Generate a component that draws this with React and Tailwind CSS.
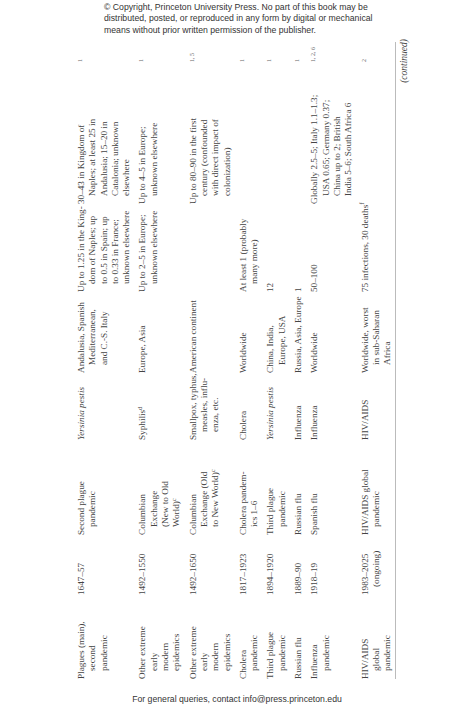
import React from 'react'

// rows of the rotated table: each cell is a list of printed lines
const rows = [
  {
    cells: [
      ['Plagues (main),', 'second', 'pandemic'],
      ['1647–57'],
      ['Second plague', 'pandemic'],
      [<i key="y">Yersinia pestis</i>],
      ['Andalusia, Spanish', 'Mediterranean,', 'and C.-S. Italy'],
      ['Up to 1.25 in the King-', 'dom of Naples; up', 'to 0.5 in Spain; up', 'to 0.33 in France;', 'unknown elsewhere'],
      ['30–43 in Kingdom of', 'Naples; at least 25 in', 'Andalusia; 15–20 in', 'Catalonia; unknown', 'elsewhere'],
    ],
    ref: '1',
  },
  {
    cells: [
      ['Other extreme', 'early', 'modern', 'epidemics'],
      ['1492–1550'],
      ['Columbian', 'Exchange', '(New to Old', <span key="w">World)<sup>c</sup></span>],
      [<span key="s">Syphilis<sup>d</sup></span>],
      ['Europe, Asia'],
      ['Up to 2–5 in Europe;', 'unknown elsewhere'],
      ['Up to 4–5 in Europe;', 'unknown elsewhere'],
    ],
    ref: '1',
  },
  {
    cells: [
      ['Other extreme', 'early', 'modern', 'epidemics'],
      ['1492–1650'],
      ['Columbian', 'Exchange (Old', <span key="w">to New World)<sup>c</sup></span>],
      ['Smallpox, typhus,', 'measles, influ-', 'enza, etc.'],
      ['American continent'],
      [],
      ['Up to 80–90 in the first', 'century (confounded', 'with direct impact of', 'colonization)'],
    ],
    ref: '1, 5',
  },
  {
    cells: [
      ['Cholera', 'pandemic'],
      ['1817–1923'],
      ['Cholera pandem-', 'ics 1–6'],
      ['Cholera'],
      ['Worldwide'],
      ['At least 1 (probably', 'many more)'],
      [],
    ],
    ref: '1',
  },
  {
    cells: [
      ['Third plague', 'pandemic'],
      ['1894–1920'],
      ['Third plague', 'pandemic'],
      [<i key="y">Yersinia pestis</i>],
      ['China, India,', 'Europe, USA'],
      ['12'],
      [],
    ],
    ref: '1',
  },
  {
    cells: [
      ['Russian flu'],
      ['1889–90'],
      ['Russian flu'],
      ['Influenza'],
      ['Russia, Asia, Europe'],
      ['1'],
      [],
    ],
    ref: '1',
  },
  {
    cells: [
      ['Influenza', 'pandemic'],
      ['1918–19'],
      ['Spanish flu'],
      ['Influenza'],
      ['Worldwide'],
      ['50–100'],
      ['Globally 2.5–5; Italy 1.1–1.3;', 'USA 0.65; Germany 0.37;', 'China up to 2; British', 'India 5–6; South Africa 6'],
    ],
    ref: '1, 2, 6',
  },
  {
    cells: [
      ['HIV/AIDS', 'global', 'pandemic'],
      ['1983–2025', '(ongoing)'],
      ['HIV/AIDS global', 'pandemic'],
      ['HIV/AIDS'],
      ['Worldwide, worst', 'in sub-Saharan', 'Africa'],
      [<span key="d">75 infections, 30 deaths<sup>f</sup></span>],
    ],
    ref: '2',
    wide: true,
  },
]

function Cell({ lines, span }) {
  return (
    <div className={span ? 'col-span-2' : ''}>
      {lines.map((line, i) => (
        <div key={i} className={i === 0 ? 'whitespace-nowrap' : 'whitespace-nowrap pl-[8px]'}>
          {line}
        </div>
      ))}
    </div>
  )
}

export default function App() {
  return (
    <div className="w-[474px] h-[715px] bg-white flex flex-col overflow-hidden">
      <div className="h-[35px] shrink-0 pt-[1.5px]">
        <p className="w-[266px] mx-auto whitespace-nowrap text-[8.7px] leading-[11.5px] text-[#333] font-['Liberation_Sans',Arial,sans-serif]">
          © Copyright, Princeton University Press. No part of this book may be
          <br />
          distributed, posted, or reproduced in any form by digital or mechanical
          <br />
          means without prior written permission of the publisher.
        </p>
      </div>

      <div className="h-[650px] shrink-0 flex items-center justify-center overflow-hidden">
        <div className="w-[640px] h-[342px] shrink-0 ml-[12px] mb-[2px] -rotate-90 pt-[4px] font-['Liberation_Serif','Times_New_Roman',serif] text-[9.2px] leading-[11.3px] text-[#444]">
          <div className="w-[637px] grid grid-cols-[84px_60px_95px_67px_81px_88px_142px_20px] gap-y-[5px]">
            {rows.map((row, r) => (
              <React.Fragment key={r}>
                {row.cells.map((lines, c) => (
                  <Cell key={c} lines={lines} span={row.wide && c === 5} />
                ))}
                <div className="text-[6px] leading-[8px] text-[#666] whitespace-nowrap">{row.ref}</div>
              </React.Fragment>
            ))}
          </div>
          <div className="w-[637px] mt-[2px] border-t border-[#bbb]"></div>
          <div className="mt-[3px] text-right italic text-[9.5px]">(continued)</div>
        </div>
      </div>

      <div className="flex-1 pt-[9px] text-center text-[8.7px] leading-[11.5px] text-[#333] font-['Liberation_Sans',Arial,sans-serif]">
        For general queries, contact info@press.princeton.edu
      </div>
    </div>
  )
}
